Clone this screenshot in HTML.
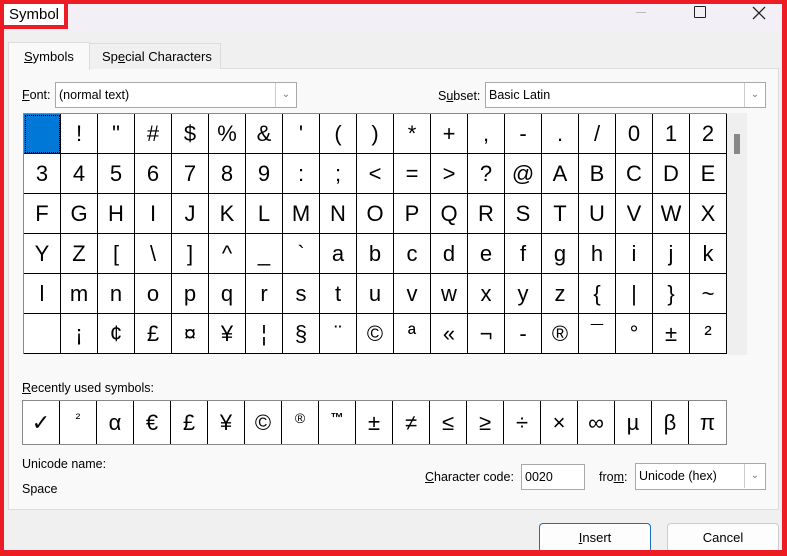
<!DOCTYPE html>
<html><head><meta charset="utf-8"><style>
*{box-sizing:border-box;margin:0;padding:0}
body{width:787px;height:556px;overflow:hidden;background:#f0f0f0;font-family:"Liberation Sans","DejaVu Sans",sans-serif;font-size:12px;color:#000;position:relative}
.abs{position:absolute}
.frame{position:absolute;left:0;top:0;width:787px;height:556px;border:4px solid #ed1c24;border-top-width:4px;border-bottom-width:6px;border-right-width:5px;pointer-events:none;z-index:10}
.title{left:0;top:0;width:787px;height:32px;background:#f3eff6}
.tbox{left:0;top:0;width:68px;height:29px;border:4px solid #ed1c24;background:#fff;font-size:15px;padding:2px 0 0 5px;z-index:11}
.panel{left:8px;top:68px;width:771px;height:442px;background:#f9f9f9;border:1px solid #dcdcdc}
.tab1{left:8px;top:42px;width:82px;height:28px;background:#f9f9f9;border:1px solid #dcdcdc;border-bottom:none;font-size:13px;padding:6px 0 0 15px;z-index:2}
.tab2{left:89px;top:43px;width:132px;height:26px;background:#f0f0f0;border:1px solid #dcdcdc;border-bottom:none;font-size:13px;padding:5px 0 0 12px}
.sel{background:#fff;border:1px solid #a8a8a8;height:26px;font-size:12.5px;padding:5px 0 0 3px}
.dd{position:absolute;right:0;top:0;width:21px;height:24px;border-left:1px solid #ccc;color:#777;font-size:10px;text-align:center;line-height:24px}
.grid{left:23px;top:113px;display:grid;grid-template-columns:repeat(19,37px);grid-auto-rows:40px;border-left:1px solid #888;border-top:1px solid #888;background:#fff}
.grid div{border-right:1px solid #000;border-bottom:1px solid #000;font-size:22px;text-align:center;line-height:40px}
.recent{left:22px;top:400px;display:grid;grid-template-columns:repeat(19,37px);grid-auto-rows:43px;border:1px solid #888;background:#fff;width:705px}
.recent div{border-right:1px solid #000;font-size:22px;text-align:center;line-height:43px}
.recent div:last-child{border-right:none}
.btn{height:30px;border:1px solid #ccc;background:#fdfdfd;border-radius:4px;text-align:center;font-size:13px;line-height:28px}
u{text-decoration:underline}
</style></head><body>
<div class="abs title"></div>
<div class="abs tbox">Symbol</div>
<div class="abs" style="left:636px;top:12px;width:10px;height:1px;background:#bbb"></div>
<div class="abs" style="left:694px;top:6px;width:12px;height:12px;border:1.5px solid #222;border-radius:1px"></div>
<svg class="abs" style="left:752px;top:6px" width="14" height="14"><path d="M1 1L13 13M13 1L1 13" stroke="#222" stroke-width="1.3"/></svg>
<div class="abs panel"></div>
<div class="abs tab1"><u>S</u>ymbols</div>
<div class="abs tab2">Sp<u>e</u>cial Characters</div>
<div class="abs" style="left:22px;top:88px;font-size:12.5px"><u>F</u>ont:</div>
<div class="abs sel" style="left:55px;top:82px;width:242px">(normal text)<span class="dd">&#8964;</span></div>
<div class="abs" style="left:438px;top:89px;font-size:12.5px">S<u>u</u>bset:</div>
<div class="abs sel" style="left:485px;top:82px;width:281px">Basic Latin<span class="dd">&#8964;</span></div>
<div class="abs grid">
<div style="background:#0078d7;outline:1px dotted #000;outline-offset:-2px"></div><div>!</div><div>"</div><div>#</div><div>$</div><div>%</div><div>&amp;</div><div>'</div><div>(</div><div>)</div><div>*</div><div>+</div><div>,</div><div>-</div><div>.</div><div>/</div><div>0</div><div>1</div><div>2</div>
<div>3</div><div>4</div><div>5</div><div>6</div><div>7</div><div>8</div><div>9</div><div>:</div><div>;</div><div>&lt;</div><div>=</div><div>&gt;</div><div>?</div><div>@</div><div>A</div><div>B</div><div>C</div><div>D</div><div>E</div>
<div>F</div><div>G</div><div>H</div><div>I</div><div>J</div><div>K</div><div>L</div><div>M</div><div>N</div><div>O</div><div>P</div><div>Q</div><div>R</div><div>S</div><div>T</div><div>U</div><div>V</div><div>W</div><div>X</div>
<div>Y</div><div>Z</div><div>[</div><div>\</div><div>]</div><div>^</div><div>_</div><div>`</div><div>a</div><div>b</div><div>c</div><div>d</div><div>e</div><div>f</div><div>g</div><div>h</div><div>i</div><div>j</div><div>k</div>
<div>l</div><div>m</div><div>n</div><div>o</div><div>p</div><div>q</div><div>r</div><div>s</div><div>t</div><div>u</div><div>v</div><div>w</div><div>x</div><div>y</div><div>z</div><div>{</div><div>|</div><div>}</div><div>~</div>
<div></div><div>¡</div><div>¢</div><div>£</div><div>¤</div><div>¥</div><div>¦</div><div>§</div><div>¨</div><div>©</div><div>ª</div><div>«</div><div>¬</div><div>-</div><div>®</div><div>¯</div><div>°</div><div>±</div><div>²</div>
</div>
<div class="abs" style="left:727px;top:113px;width:20px;height:242px;background:#efefef"></div>
<div class="abs" style="left:734px;top:134px;width:6px;height:20px;background:#888"></div>
<div class="abs" style="left:22px;top:381px;font-size:12.5px"><u>R</u>ecently used symbols:</div>
<div class="abs recent">
<div>✓</div><div style="font-size:14px;line-height:34px">²</div><div>α</div><div>€</div><div>£</div><div>¥</div><div>©</div><div style="font-size:14px;line-height:34px">®</div><div style="font-size:13px;line-height:34px;font-weight:bold">™</div><div>±</div><div>≠</div><div>≤</div><div>≥</div><div>÷</div><div>×</div><div>∞</div><div>µ</div><div>β</div><div>π</div>
</div>
<div class="abs" style="left:22px;top:457px;font-size:12.5px">Unicode name:</div>
<div class="abs" style="left:22px;top:482px;font-size:12.5px">Space</div>
<div class="abs" style="left:425px;top:470px;font-size:12.5px"><u>C</u>haracter code:</div>
<div class="abs" style="left:521px;top:464px;width:64px;height:26px;background:#fff;border:1px solid #a8a8a8;font-size:12.5px;padding:5px 3px">0020</div>
<div class="abs" style="left:599px;top:470px;font-size:12.5px">fro<u>m</u>:</div>
<div class="abs sel" style="left:635px;top:463px;width:131px;height:27px">Unicode (hex)<span class="dd">&#8964;</span></div>
<div class="abs btn" style="left:539px;top:523px;width:112px;border-color:#1a6fc0"><u>I</u>nsert</div>
<div class="abs btn" style="left:667px;top:523px;width:112px">Cancel</div>
<div class="frame"></div>
</body></html>
